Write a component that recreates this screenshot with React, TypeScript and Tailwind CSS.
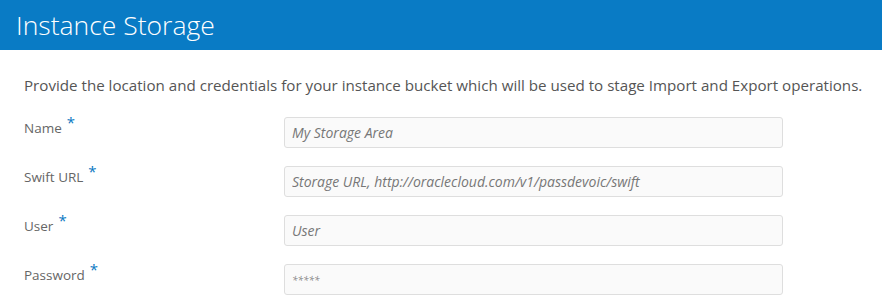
const fields = [
  { label: "Name", placeholder: "My Storage Area" },
  { label: "Swift URL", placeholder: "Storage URL, http://oraclecloud.com/v1/passdevoic/swift" },
  { label: "User", placeholder: "User" },
  { label: "Password", placeholder: "*****", password: true },
];

export default function App() {
  return (
    <div className="w-[882px] h-[296px] overflow-hidden bg-white font-['Open_Sans',sans-serif]">
      <div className="h-[50px] bg-[#097bc5] flex items-center px-4">
        <h1 className="text-[26.5px] font-light text-white leading-none">Instance Storage</h1>
      </div>
      <div className="px-6 pt-[25px]">
        <p className="text-[15.15px] leading-5 text-[#555555] whitespace-nowrap">
          Provide the location and credentials for your instance bucket which will be used to stage Import and Export operations.
        </p>
        <div className="mt-[22px] flex flex-col gap-[18px]">
          {fields.map((f) => (
            <div key={f.label} className="flex">
              <label className="w-[260px] text-[13.5px] leading-5 text-[#666666]">
                {f.label}
                <span className="ml-[5px] relative top-[-5px] text-[#0a78c2] text-[15px]">*</span>
              </label>
              <input
                type={f.password ? "password" : "text"}
                placeholder={f.placeholder}
                className={
                  f.password
                    ? "w-[499px] h-[31px] rounded-[3px] border border-[#dedede] bg-[#fafafa] px-[7px] text-[10px] italic placeholder:text-[#888888] outline-none"
                    : "w-[499px] h-[31px] rounded-[3px] border border-[#dedede] bg-[#fafafa] px-[7px] text-[14px] italic placeholder:text-[#777777] outline-none"
                }
              />
            </div>
          ))}
        </div>
      </div>
    </div>
  );
}
